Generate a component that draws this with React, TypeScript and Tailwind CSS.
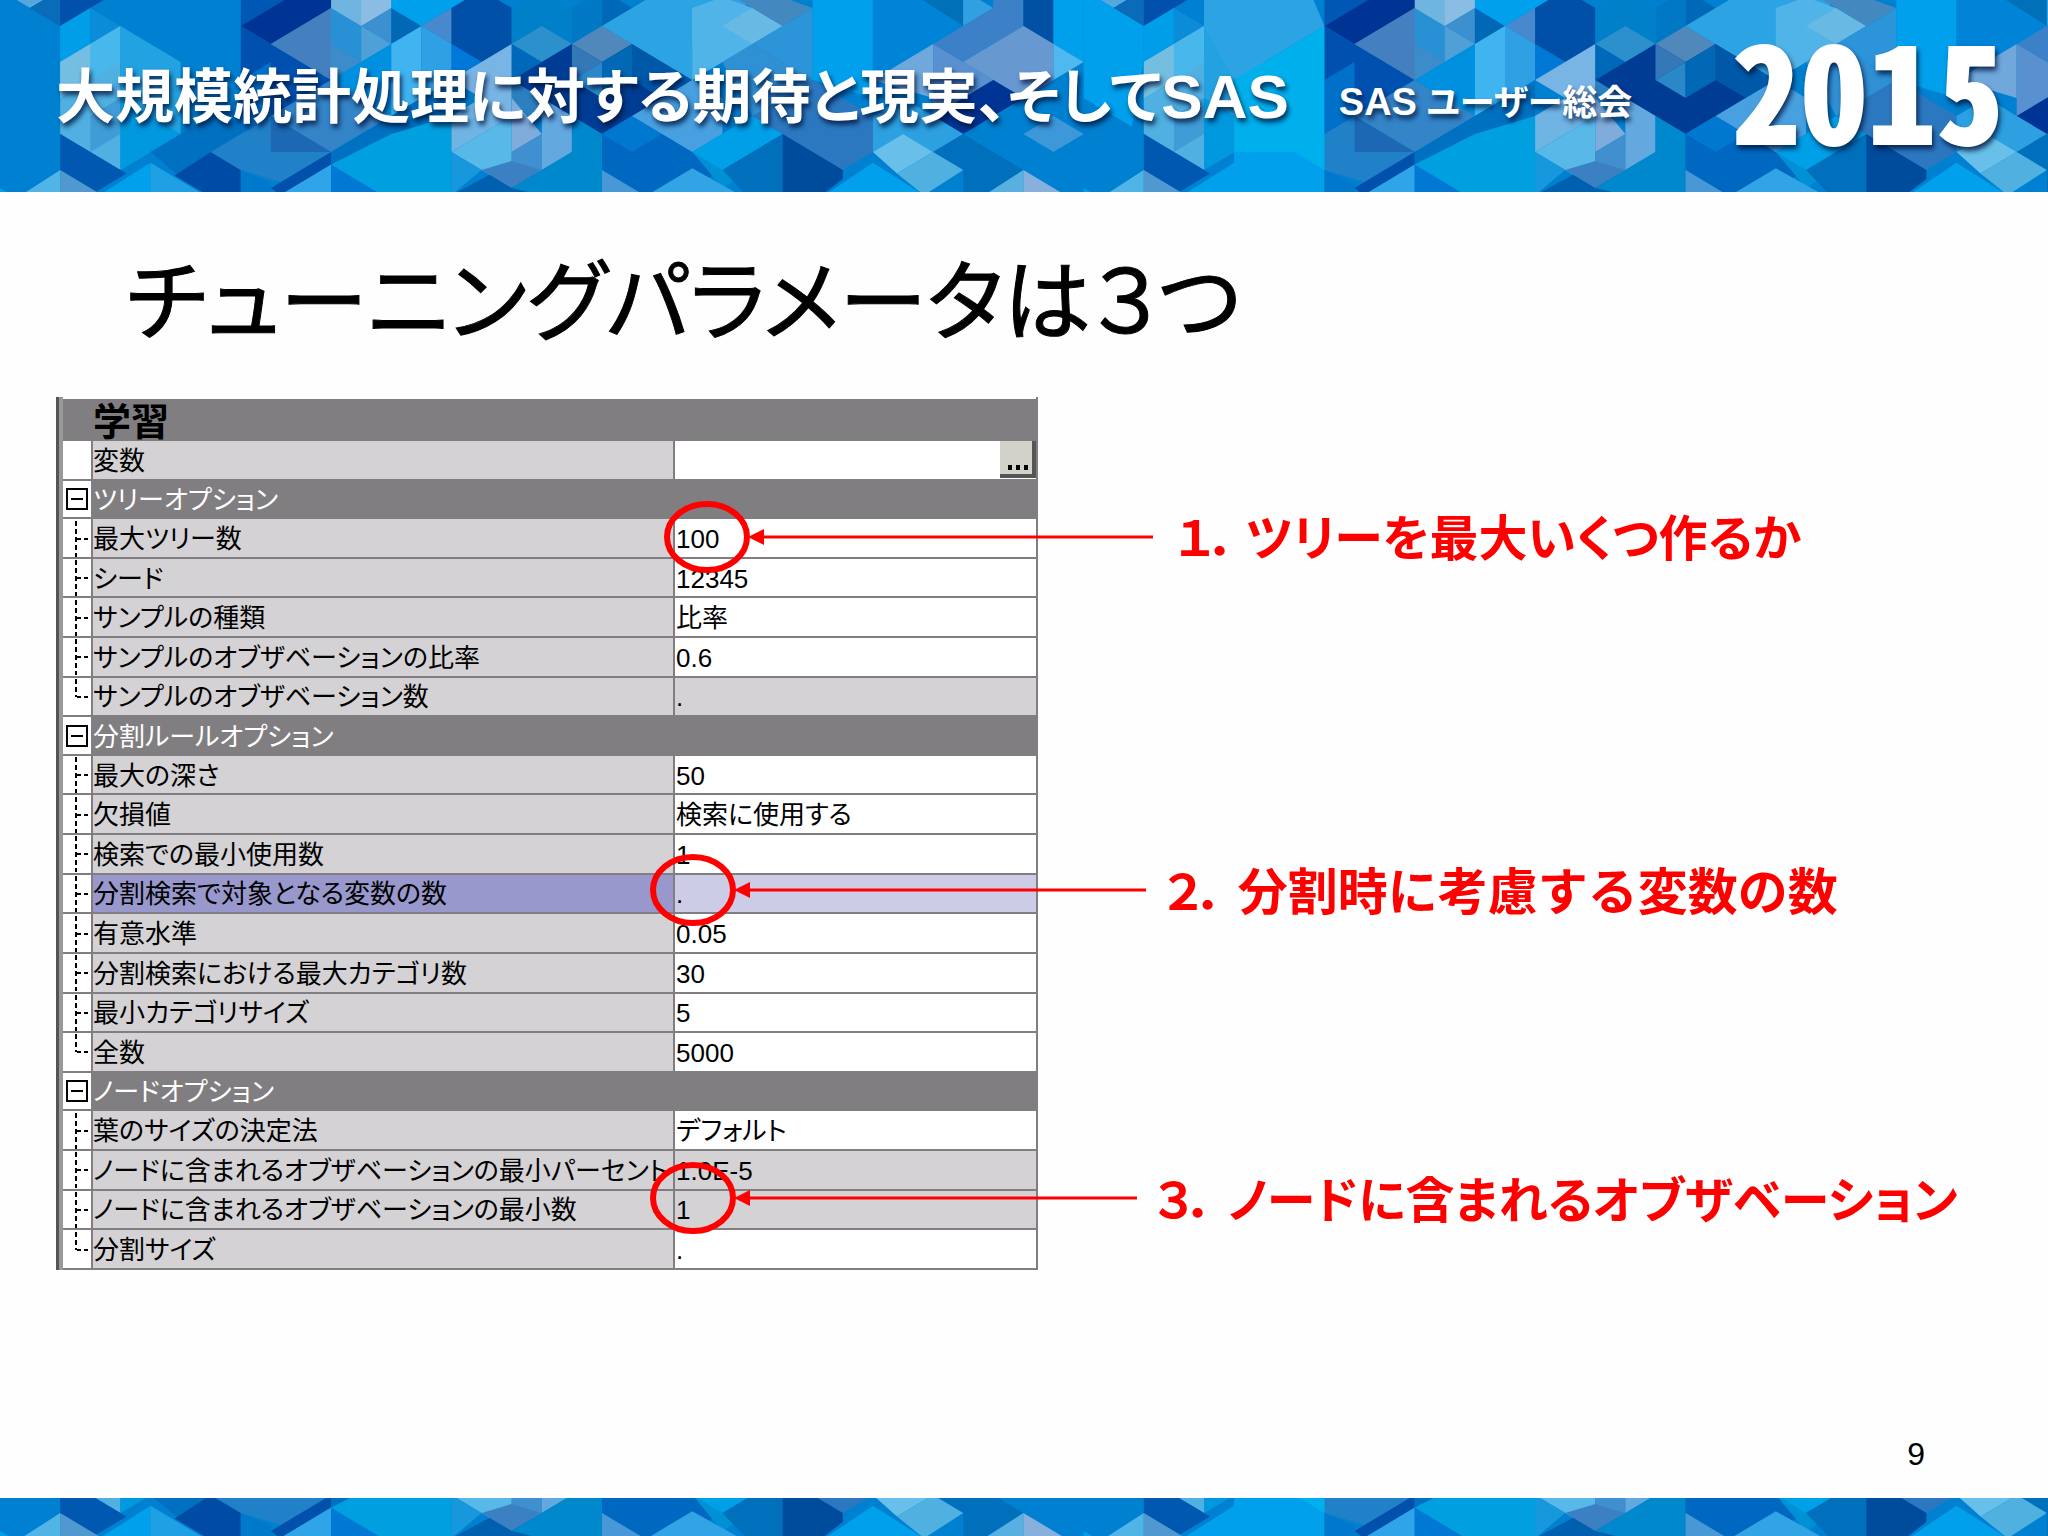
interface Row {
  kind: 'title' | 'plain' | 'group' | 'item'
  label: string
  value?: string
  disabled?: boolean
  selected?: boolean
  last?: boolean
}

const rows: Row[] = [
  { kind: 'title', label: '学習' },
  { kind: 'plain', label: '変数' },
  { kind: 'group', label: 'ツリーオプション' },
  { kind: 'item', label: '最大ツリー数', value: '100' },
  { kind: 'item', label: 'シード', value: '12345' },
  { kind: 'item', label: 'サンプルの種類', value: '比率' },
  { kind: 'item', label: 'サンプルのオブザベーションの比率', value: '0.6' },
  { kind: 'item', label: 'サンプルのオブザベーション数', value: '.', disabled: true, last: true },
  { kind: 'group', label: '分割ルールオプション' },
  { kind: 'item', label: '最大の深さ', value: '50' },
  { kind: 'item', label: '欠損値', value: '検索に使用する' },
  { kind: 'item', label: '検索での最小使用数', value: '1' },
  { kind: 'item', label: '分割検索で対象となる変数の数', value: '.', selected: true },
  { kind: 'item', label: '有意水準', value: '0.05' },
  { kind: 'item', label: '分割検索における最大カテゴリ数', value: '30' },
  { kind: 'item', label: '最小カテゴリサイズ', value: '5' },
  { kind: 'item', label: '全数', value: '5000', last: true },
  { kind: 'group', label: 'ノードオプション' },
  { kind: 'item', label: '葉のサイズの決定法', value: 'デフォルト' },
  { kind: 'item', label: 'ノードに含まれるオブザベーションの最小パーセント', value: '1.0E-5', disabled: true },
  { kind: 'item', label: 'ノードに含まれるオブザベーションの最小数', value: '1', disabled: true },
  { kind: 'item', label: '分割サイズ', value: '.', last: true }
]

// Mosaic facets on a triangular lattice: x counts columns, y counts half rows
const facets: [string, string][] = [
  ['#55a8dc', '.5,-.5 1,0 2,-1'],
  ['#0050ac', '1,0 2,1 4,-1 2,-1'],
  ['#0a6cb8', '1,0 2,1 2,-1'],
  ['#009de8', '2,1 3,0 3,2 2,3'],
  ['#0a8cd8', '3,0 3,2 4,1'],
  ['#50b0e2', '2,3 4,1 4,9 2,7'],
  ['#48b8ec', '3,2 4,1 4,3 3,4'],
  ['#74bee2', '2,3 3,2 3,4 2,5'],
  ['#3f9cd6', '3,6 4,5 4,7 3,8'],
  ['#22a2e0', '4,1 6,3 6,7 4,9'],
  ['#0098de', '4,5 6,7 4,9'],
  ['#0058b0', '2,7 4.2,9.2 3,10.4 2,9'],
  ['#50b4e6', '2,9 .7,10.4 2,10.4'],
  ['#5098d0', '2,9 3.4,10.4 2,10.4'],
  ['#00a0e4', '0,10 .4,10.4 0,10.4'],
  ['#0070c0', '5,8 8,5 8,9 7,8 6,9.4'],
  ['#00a0ec', '5,8.6 3.3,10.4 5,10.4'],
  ['#20a0e4', '5,8.6 6.8,10.4 5,10.4'],
  ['#004ca4', '7,8 8,9 8,10.4 6.9,10.4 5.8,9.3'],
  ['#0050b0', '8,1 11,4 9,6 8,7'],
  ['#0070c8', '8,4 9,3 9,6 8,7'],
  ['#0058b4', '8,1 9.6,-.6 8,-.6'],
  ['#003494', '8,1 9.6,-.6 11.6,-.6 9,2'],
  ['#4480c0', '9,2 11,0 12,-1 12,3 11,4'],
  ['#2890d4', '11,0 12,1 12,3 11,2'],
  ['#3c8ccc', '11,2 12,3 11,4'],
  ['#3484c8', '9,6 11,4 13,6 11,8'],
  ['#2080c8', '7,8 9,6 11,8 9.6,9.8 8,9'],
  ['#1c68b4', '9,6 11,8 9,8'],
  ['#0078cc', '8,9 9,9.7 9,10.4 8,10.4'],
  ['#0050ac', '11,8 9,10 9.3,10.4 11,8.7'],
  ['#30a4e8', '11,8.7 9.3,10.4 11,10.4'],
  ['#0078d4', '11,8.7 12.7,10.4 11,10.4'],
  ['#70b4e0', '11,0 12,1 13,0 13,-1 11,-1'],
  ['#8abce4', '12,-1 13,-1 13,0 12,1'],
  ['#3c90d0', '12,1 13,0 13,2'],
  ['#0068b4', '13,0 14,1 13,2'],
  ['#00a0ec', '13,0 13,-1 16,-1 14,1'],
  ['#4888cc', '14,1 15,0 15,2'],
  ['#50a0d8', '12,1 13,2 12,3'],
  ['#0090e0', '11,4 13,2 13,6'],
  ['#40b4f0', '13,2 14,1 14,5 13,6'],
  ['#30a0e4', '14,1 15,2 15,4 14,5'],
  ['#0070c0', '11,8 15,4 15,6 13,8 11,8.7'],
  ['#00a0e0', '11,8.7 13,7 15,6 15,10.4 12.7,10.4'],
  ['#0050a8', '15,0 16,-1 17,0 17,2 16,3 15,2'],
  ['#0078d8', '15,2 16,3 15,4'],
  ['#78b4e4', '17,2 15,4 17,6'],
  ['#0080c8', '17,0 18,-1 19,0 19,2 18,1 17,2'],
  ['#2c90cc', '17,2 18,1 19,2 18,3'],
  ['#0068b8', '17,2 18,3 17,4'],
  ['#0078c4', '19,0 20,-1 20,1 19,2'],
  ['#0068b8', '20,-1 21,0 20,1'],
  ['#2c80c0', '17,4 19,6 17,6'],
  ['#003c94', '17,4 19,2 21,2 23,4 20,7 19,6'],
  ['#5088bc', '19,2 20,1 21,2 20,3'],
  ['#3478b8', '19,2 20,3 19,4'],
  ['#2a88c8', '19,4 20,3 20,5'],
  ['#0068b4', '20,3 21,2 21,4 20,5'],
  ['#0058a8', '21,2 23,4 22,5 21,4'],
  ['#2ca4e4', '20,1 22,-1 25,-1 24,3 23,4 21,2'],
  ['#50b4e8', '23,0 25,2 23,4'],
  ['#70b4e4', '15,6 16,5 17,6 15,8'],
  ['#58b8e8', '17,6 17,10 15,8'],
  ['#80acdc', '17,5 18,7 17,8'],
  ['#4090d0', '17,8 18,7 18,9 17,10'],
  ['#64a8e0', '18,7 18,5 19,6 19,8 18,9'],
  ['#1898dc', '15,8 16,9 15,10.4'],
  ['#0060b0', '17,8.6 15,10.4 19,10.4'],
  ['#3c80c4', '16,9 17,8.5 18,9 17,10'],
  ['#0088cc', '19,6 20,7 20,10.4 18,10.4 17,10 19,8'],
  ['#0068c0', '20,7 21,6 23,8 24,9 22.6,10.4 21.4,10.4 20,9'],
  ['#0078d0', '20,7 21,6 22,7 21,8'],
  ['#48a0e0', '21,6 23,4 24,5 24,7 23,8'],
  ['#4898d8', '20,9 21.4,10.4 20,10.4'],
  ['#0090d4', '23,8 25,6 25,9 24,10'],
  ['#30a4e4', '23,8.9 21.5,10.4 24.6,10.4'],
  ['#50b4e8', '24,-.6 25,0 26,1 24,3 23,2 23,0'],
  ['#68bae4', '24,1 25,0 26,1 25,2'],
  ['#4488c0', '24.4,-.6 26,-.6 27,0 26,1'],
  ['#2c94d8', '25,2 26,1 27,0 27,4'],
  ['#3090d4', '24,3 25,2 27,4 25,6'],
  ['#00a0ec', '27,-1 29,-1 29,5 27,4'],
  ['#0084d8', '29,-1 31,-1 32,1 31,2 29,4'],
  ['#0070b8', '30.5,-.6 32,-.6 32,1'],
  ['#30a0e0', '32,-.6 32,1 33,0 32.4,-.6'],
  ['#3c80c8', '31,2 33,0 33,-.6 34,-.6 34,1 32,3'],
  ['#70a8dc', '29,4 31,2 31,5'],
  ['#5890d0', '31,2 32,3 33,4 32,5 31,6'],
  ['#0050a4', '34,-.6 35,-.6 35,2 34,1'],
  ['#00a0ec', '35,-.6 36,-.6 36,3 35,2'],
  ['#6898d0', '34,1 35,2 35,4 34,5 32,3'],
  ['#50b8f0', '35,2 36,3 35,4'],
  ['#00a0e8', '23,8 25,6 26,7 24,9'],
  ['#0070bc', '24,9 26,7 26,10.4 24.8,10.4'],
  ['#2c78c0', '25,6 27,4 29,6 29,8 28,9'],
  ['#004c9c', '26,7 28,9 28,9.5 27.3,10.4 26,10.4'],
  ['#003494', '31,6 33,4 34,5 32,7'],
  ['#2ca0e0', '29,6 30,5 32,7 31,8 30,7 29,8'],
  ['#0070bc', '31,8 32,7 34,9 32.7,10.4 32,10.4 32,9'],
  ['#3c98d8', '34,7 35,6 36,7 35,8'],
  ['#68c0ea', '29,8 30,7 31,8 29.8,9.2'],
  ['#50b0e0', '31,8 32,9 30.7,10.4 29.8,9.2'],
  ['#00a0ec', '29,8.6 27.4,10.4 30.7,10.4'],
  ['#58b0e0', '34,9 32.7,10.4 34,10.4'],
  ['#88b0dc', '34,9 35.4,10.4 34,10.4']
]

function Mosaic({ id, viewBox }: { id: string; viewBox: string }) {
  return (
    <svg
      className="absolute inset-0 h-full w-full"
      viewBox={viewBox}
      preserveAspectRatio="xMidYMid slice"
      aria-hidden="true"
    >
      <rect width="2048" height="193" fill="#0080d0" />
      <g transform="translate(0 8) scale(30.1 18)">
        <g id={id}>
          {facets.map(([fill, points], i) => (
            <polygon key={i} fill={fill} points={points} />
          ))}
        </g>
        <use href={`#${id}`} x="36" />
        <polygon fill="#00a0ec" points="36,-1 36,5 37.6,6.6 38,3 38,1" />
        <polygon fill="#2ca4e4" points="40,-1 43.6,-.6 44,1 41,4 40,1" />
        <polygon fill="#00a0ec" points="41,4 44,7 44,10.4 41,10.4" />
        <polygon fill="#00b0ec" points="44,1 41,4 41,8 43,8 44,9" />
      </g>
    </svg>
  )
}

function TreeLine({ last }: { last?: boolean }) {
  return (
    <svg className="block h-[37px] w-7" viewBox="0 0 28 37" stroke="#000" strokeWidth="2" fill="none">
      <path d={last ? 'M13 1V19' : 'M13 1V37'} strokeDasharray="5 3" />
      <path d="M14 19H26" strokeDasharray="4 3" />
    </svg>
  )
}

function Gutter({ row }: { row: Row }) {
  if (row.kind === 'group') {
    return (
      <button
        aria-label={`${row.label}を折りたたむ`}
        className="ml-[3px] flex h-[22px] w-[22px] items-center justify-center border-2 border-black bg-white"
      >
        <span className="h-[2px] w-3 bg-black"></span>
      </button>
    )
  }
  if (row.kind === 'item') {
    return <TreeLine last={row.last} />
  }
  return null
}

function PropertyRow({ row }: { row: Row }) {
  if (row.kind === 'title') {
    return (
      <tr className="h-[42px] bg-[#807e80]">
        <td></td>
        <th colSpan={2} className="p-0 pt-1 pl-[2px] text-left text-[38px] leading-[38px] font-bold">
          {row.label}
        </th>
      </tr>
    )
  }

  if (row.kind === 'group') {
    return (
      <tr>
        <td className="border-b-2 border-[#807e80] bg-white p-0">
          <Gutter row={row} />
        </td>
        <th
          colSpan={2}
          className="border-b-2 border-l-2 border-[#807e80] bg-[#807e80] p-0 pt-[2px] text-left font-normal text-white"
        >
          {row.label}
        </th>
      </tr>
    )
  }

  const labelColor = row.selected ? 'bg-[#9898cc]' : 'bg-[#d4d2d4]'
  const valueColor = row.selected ? 'bg-[#cccce6]' : row.disabled ? 'bg-[#d4d2d4]' : 'bg-white'

  return (
    <tr>
      <td className="border-b-2 border-[#807e80] bg-white p-0">
        <Gutter row={row} />
      </td>
      <th className={`border-b-2 border-l-2 border-[#807e80] p-0 pt-[2px] text-left font-normal ${labelColor}`}>
        {row.label}
      </th>
      {row.kind === 'plain' ? (
        <td className={`border-b-2 border-l-2 border-[#807e80] p-0 ${valueColor}`}>
          <button
            aria-label="変数を編集"
            className="ml-auto flex h-[37px] w-9 items-end justify-end gap-1 border-r-4 border-b-4 border-[#555] bg-[#d2d2ca] pr-1 pb-1"
          >
            <span className="h-[5px] w-1 bg-black"></span>
            <span className="h-[5px] w-1 bg-black"></span>
            <span className="h-[5px] w-1 bg-black"></span>
          </button>
        </td>
      ) : (
        <td className={`border-b-2 border-l-2 border-[#807e80] p-0 pt-[2px] pl-px ${valueColor}`}>{row.value}</td>
      )}
    </tr>
  )
}

export default function App() {
  return (
    <div className="flex min-h-screen flex-col bg-[#fefefe] font-['Liberation_Sans','Noto_Sans_CJK_JP',sans-serif] text-black">
      {/* Banner */}
      <header className="relative h-48 overflow-hidden text-white">
        <Mosaic id="facets-top" viewBox="0 0 2048 192" />
        <div className="relative flex h-full items-center justify-between pr-11 pl-14 font-bold whitespace-nowrap [text-shadow:2px_4px_5px_rgba(0,20,60,0.8)]">
          <div className="flex items-center gap-[50px]">
            <p className="text-[59px] [font-feature-settings:'palt']">
              大規模統計処理に対する期待と現実、そして<span className="text-[62px]">SAS</span>
            </p>
            <p className="pt-3 text-[35px] [font-feature-settings:'palt']">
              <span className="text-[38px]">SAS</span> ユーザー総会
            </p>
          </div>
          <p className="pb-5 font-['Noto_Sans_CJK_JP',sans-serif] text-[136px] leading-none font-black [font-feature-settings:'hwid']">
            2015
          </p>
        </div>
      </header>

      <main className="flex-1 pl-14">
        <h1 className="pt-[47px] pl-[70px] text-[88px] leading-[128px] [-webkit-text-stroke:1px_black] [font-feature-settings:'palt']">
          チューニングパラメータは３つ
        </h1>

        <div className="relative mt-[30px] flex">
          {/* Property sheet */}
          <div className="w-[982px] shrink-0 border-r-2 border-l-[3px] border-[#555] border-r-[#807e80]">
            <div className="border-l-4 border-[#9a989a] pt-[2px]">
              <table className="h-[871px] w-full table-fixed border-separate border-spacing-0 text-[26px] leading-[34px] whitespace-nowrap [font-feature-settings:'palt']">
                <colgroup>
                  <col className="w-7" />
                  <col className="w-[582px]" />
                  <col />
                </colgroup>
                <tbody>
                  {rows.map((row) => (
                    <PropertyRow key={row.label} row={row} />
                  ))}
                </tbody>
              </table>
            </div>
          </div>

          {/* Callouts */}
          <div className="text-[49px] leading-[60px] font-bold whitespace-nowrap text-[#ff0000] [font-feature-settings:'palt']">
            <p className="pt-[112px] pl-[138px]">
              <span className="mr-2">１．</span>ツリーを最大いくつ作るか
            </p>
            <p className="pt-[294px] pl-[126px]">
              <span className="mr-3">２．</span>
              <span className="text-[50px] [font-feature-settings:normal]">分割時に考慮する変数の数</span>
            </p>
            <p className="pt-[248px] pl-[116px]">
              <span className="mr-3">３．</span>ノードに含まれるオブザベーション
            </p>
          </div>

          <svg className="pointer-events-none absolute top-0 left-0" width="1100" height="873" fill="none" stroke="#ff0000">
            <g strokeWidth="6">
              <ellipse cx="651" cy="140" rx="40" ry="33" />
              <ellipse cx="637" cy="493" rx="40" ry="33" />
              <ellipse cx="637" cy="801" rx="40" ry="33" />
            </g>
            <path strokeWidth="3" d="M700 140H1097M686 493H1090M686 801H1081" />
            <path stroke="none" fill="#ff0000" d="M692 140l16-8v16zM678 493l16-8v16zM678 801l16-8v16z" />
          </svg>
        </div>
      </main>

      {/* Page number */}
      <p className="pr-[123px] pb-[25px] text-right text-[32px] leading-[38px]">9</p>
      <footer className="relative h-[38px] overflow-hidden">
        <Mosaic id="facets-bottom" viewBox="0 155 2048 38" />
      </footer>
    </div>
  )
}
